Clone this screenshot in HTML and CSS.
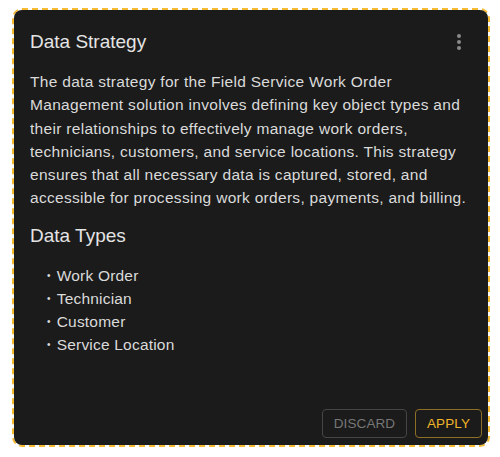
FILE: index.html
```html
<!DOCTYPE html>
<html>
<head>
<meta charset="utf-8">
<link rel="stylesheet" href="styles.css">
</head>
<body>
<div class="frame">
  <div class="card">
    <div class="header">
      <h2 class="title">Data Strategy</h2>
      <button class="menu" aria-label="More">
        <svg width="4" height="16" viewBox="0 0 4 16"><circle cx="2" cy="2" r="2" fill="#8a8a8a"/><circle cx="2" cy="8" r="2" fill="#8a8a8a"/><circle cx="2" cy="14" r="2" fill="#8a8a8a"/></svg>
      </button>
    </div>
    <p class="body">The data strategy for the Field Service Work Order Management solution involves defining key object types and their relationships to effectively manage work orders, technicians, customers, and service locations. This strategy ensures that all necessary data is captured, stored, and accessible for processing work orders, payments, and billing.</p>
    <h3 class="subtitle">Data Types</h3>
    <ul class="list">
      <li>Work Order</li>
      <li>Technician</li>
      <li>Customer</li>
      <li>Service Location</li>
    </ul>
    <div class="actions">
      <button class="btn btn-discard">DISCARD</button>
      <button class="btn btn-apply">APPLY</button>
    </div>
  </div>
</div>
</body>
</html>
```
FILE: styles.css
```css
* { box-sizing: border-box; }
html, body { margin: 0; padding: 0; background: #ffffff; }
body {
  padding: 8px 10px 10px 12px;
  font-family: "Liberation Sans", Arial, sans-serif;
}
.frame {
  width: 478px;
  height: 439px;
  border: 2px dashed #f6bb33;
  border-radius: 10px;
}
.card {
  height: 100%;
  background: #1b1b1b;
  border-radius: 8px;
  padding: 20px 6px 7px 16px;
  display: flex;
  flex-direction: column;
  color: #dedede;
}
.header {
  display: flex;
  justify-content: space-between;
  align-items: flex-start;
}
.title {
  margin: 0;
  font-size: 19px;
  font-weight: 400;
  line-height: 24px;
  color: #e4e4e4;
}
.menu {
  background: none;
  border: 0;
  padding: 0;
  margin: 4px 21px 0 0;
  display: flex;
}
.body {
  margin: 16px 10px 0 0;
  font-size: 15.5px;
  line-height: 23.3px;
  letter-spacing: 0.3px;
  color: #dadada;
}
.subtitle {
  margin: 14px 0 0 0;
  font-size: 19px;
  font-weight: 400;
  line-height: 24px;
  color: #e4e4e4;
}
.list {
  margin: 16px 0 0 0;
  padding: 0 0 0 26px;
  list-style: none;
  font-size: 15.5px;
  line-height: 23.2px;
  letter-spacing: 0.2px;
  color: #dadada;
}
.list li::before {
  content: "\2022";
  font-size: 10px;
  margin: 0 6px 0 -9px;
  vertical-align: 2px;
}
.actions {
  margin-top: auto;
  display: flex;
  justify-content: flex-end;
  gap: 8px;
}
.btn {
  height: 29px;
  padding: 0;
  background: transparent;
  border-radius: 4px;
  font-family: "Liberation Sans", Arial, sans-serif;
  font-size: 13.5px;
  letter-spacing: 0.1px;
}
.btn-discard {
  width: 85px;
  border: 1px solid #454545;
  color: #777777;
}
.btn-apply {
  width: 67px;
  border: 1px solid #8d6f25;
  color: #f0b429;
}
```
